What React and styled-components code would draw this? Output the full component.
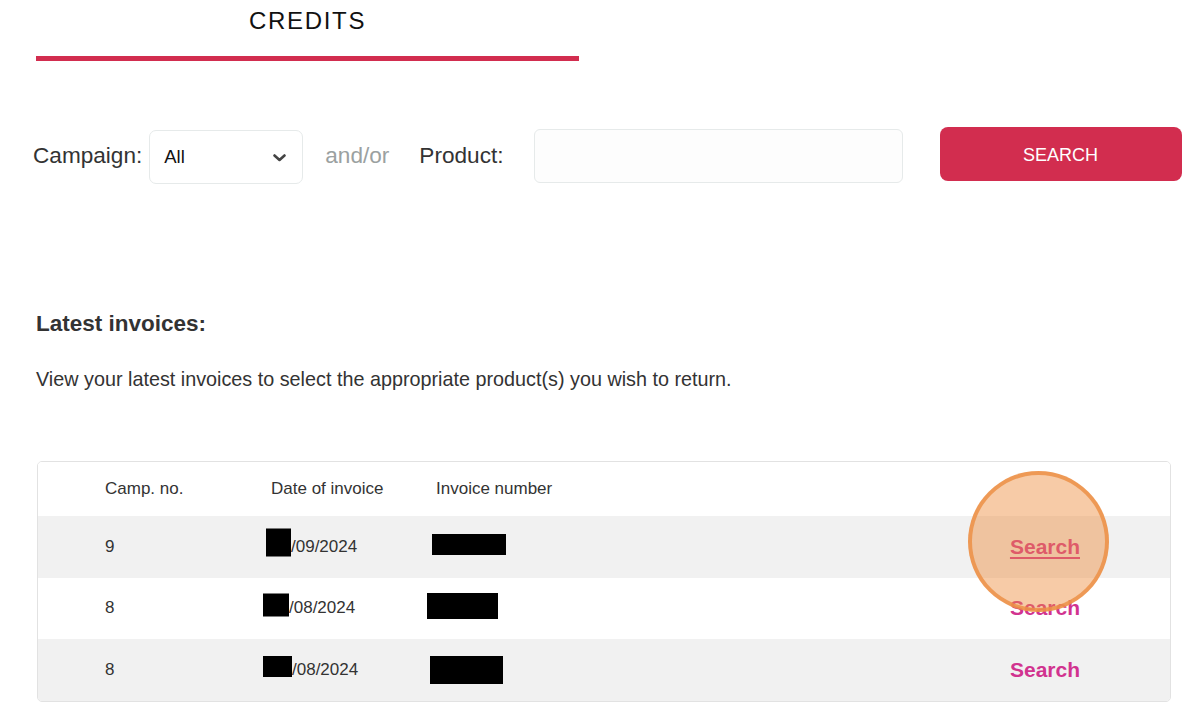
import React from 'react';
import styled, { createGlobalStyle } from 'styled-components';

const GlobalStyle = createGlobalStyle`
  body {
    margin: 0;
    background: #fff;
    font-family: "Liberation Sans", Arial, Helvetica, sans-serif;
    color: #333;
  }
`;

const invoices = [
  { camp: '9', date: '/09/2024', day: { x: -5, w: 25, h: 28, dy: -4.5 }, inv: { x: -4, w: 74, h: 21, dy: -2 } },
  { camp: '8', date: '/08/2024', day: { x: -8, w: 26, h: 23, dy: -3.5 }, inv: { x: -9, w: 71, h: 26, dy: -2 } },
  { camp: '8', date: '/08/2024', day: { x: -8, w: 29, h: 21, dy: -3 }, inv: { x: -6, w: 73, h: 28, dy: 0 } },
];

const App = () => {
  return (
    <Page>
      <GlobalStyle />
      <Tab>CREDITS</Tab>

      <FilterRow>
        <Label>Campaign:</Label>
        <Select>
          <span>All</span>
          <svg width="13" height="8" viewBox="0 0 13 8">
            <polyline points="1.5,1.5 6.5,6 11.5,1.5" fill="none" stroke="#444" strokeWidth="2.6" strokeLinecap="round" strokeLinejoin="round" />
          </svg>
        </Select>
        <AndOr>and/or</AndOr>
        <Label $gap={30}>Product:</Label>
        <Input />
        <SearchButton>SEARCH</SearchButton>
      </FilterRow>

      <Heading>Latest invoices:</Heading>
      <Intro>View your latest invoices to select the appropriate product(s) you wish to return.</Intro>

      <Table>
        <HeaderRow>
          <span>Camp. no.</span>
          <span>Date of invoice</span>
          <span>Invoice number</span>
          <span />
        </HeaderRow>
        {invoices.map((row, i) => (
          <Row key={i} $odd={i % 2 === 0}>
            <Cell>{row.camp}</Cell>
            <Cell>
              <Redacted $x={row.day.x} $w={row.day.w} $h={row.day.h} $dy={row.day.dy} />
              {row.date}
            </Cell>
            <Cell>
              <Redacted $x={row.inv.x} $w={row.inv.w} $h={row.inv.h} $dy={row.inv.dy} />
            </Cell>
            <SearchLink href="#" $active={i === 0}>Search</SearchLink>
          </Row>
        ))}
        <ClickMark />
      </Table>
    </Page>
  );
};

const Page = styled.div`
  width: 1200px;
  height: 722px;
  overflow: hidden;
`;

const Tab = styled.div`
  width: 543px;
  margin-left: 36px;
  padding: 7px 0 21px;
  text-align: center;
  font-size: 24px;
  line-height: 28px;
  letter-spacing: 1.7px;
  color: #111;
  border-bottom: 5px solid #d22d4f;
`;

const FilterRow = styled.div`
  display: flex;
  align-items: flex-start;
  margin-top: 66px;
  padding-left: 33px;
`;

const Label = styled.span`
  margin-left: ${p => p.$gap || 0}px;
  margin-top: 2px;
  font-size: 22.6px;
  line-height: 54px;
  color: #333;
`;

const AndOr = styled(Label)`
  margin-left: 22px;
  color: #9ba1a1;
`;

const Select = styled.div`
  display: flex;
  align-items: center;
  justify-content: space-between;
  box-sizing: border-box;
  width: 154px;
  height: 54px;
  margin: 3px 0 0 7px;
  padding: 0 16px 0 14px;
  border: 1px solid #e6eaea;
  border-radius: 7px;
  font-size: 18.5px;
  color: #111;
  svg {
    margin-top: 2px;
  }
`;

const Input = styled.input`
  box-sizing: border-box;
  width: 369px;
  height: 54px;
  margin: 2px 0 0 30px;
  border: 1px solid #e6eaea;
  border-radius: 6px;
  background: #fdfdfd;
  outline: none;
`;

const SearchButton = styled.button`
  width: 242px;
  height: 54px;
  margin-left: 37px;
  padding-top: 4px;
  border: none;
  border-radius: 8px;
  background: #d22d4f;
  color: #fff;
  font-family: inherit;
  font-size: 18px;
  cursor: pointer;
`;

const Heading = styled.h2`
  margin: 127px 0 0 36px;
  font-size: 22.5px;
  line-height: 26px;
  font-weight: 700;
  color: #333;
`;

const Intro = styled.p`
  margin: 29px 0 0 36px;
  font-size: 19.8px;
  line-height: 26px;
  color: #333;
`;

const Table = styled.div`
  position: relative;
  width: 1134px;
  margin: 69px 0 0 37px;
  box-sizing: border-box;
  border: 1px solid #e2e2e2;
  border-radius: 5px;
  overflow: hidden;
`;

const grid = `
  display: grid;
  grid-template-columns: 166px 165px 1fr auto;
  align-items: center;
  padding: 0 90px 0 67px;
  font-size: 17px;
  color: #333;
`;

const HeaderRow = styled.div`
  ${grid}
  height: 54px;
  background: #fff;
`;

const Row = styled.div`
  ${grid}
  height: 61.5px;
  background: ${p => (p.$odd ? '#f1f1f1' : '#fff')};
`;

const Cell = styled.div`
  display: flex;
  align-items: center;
`;

const Redacted = styled.span`
  display: inline-block;
  flex: none;
  width: ${p => p.$w}px;
  height: ${p => p.$h}px;
  margin-left: ${p => p.$x}px;
  background: #000;
  transform: translateY(${p => p.$dy}px);
`;

const SearchLink = styled.a`
  font-size: 21px;
  font-weight: 700;
  color: #d1338f;
  text-decoration: ${p => (p.$active ? 'underline' : 'none')};
  text-underline-offset: 3px;
`;

const ClickMark = styled.div`
  position: absolute;
  left: 930px;
  top: 9px;
  width: 141px;
  height: 141px;
  box-sizing: border-box;
  border: 4px solid rgba(236, 145, 70, 0.85);
  border-radius: 50%;
  background: rgba(238, 140, 60, 0.45);
  pointer-events: none;
`;

export default App;
